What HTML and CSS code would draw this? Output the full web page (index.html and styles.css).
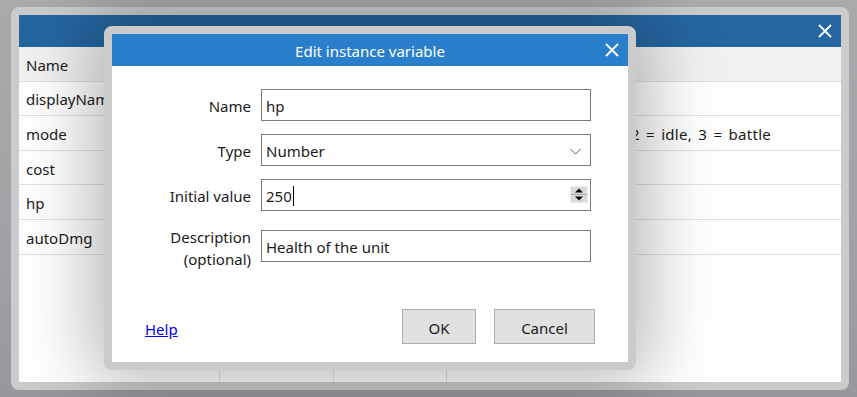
FILE: index.html
```html
<!DOCTYPE html>
<html>
<head>
<meta charset="utf-8">
<link rel="stylesheet" href="styles.css">
</head>
<body>
<div class="window">
  <div class="win-head">
    <svg class="close" width="14" height="14" viewBox="0 0 14 14"><path d="M1 1L13 13M13 1L1 13" stroke="#fff" stroke-width="1.8"/></svg>
  </div>
  <div class="table">
    <div class="col c1">
      <div class="cell head">Name</div>
      <div class="cell">displayName</div>
      <div class="cell">mode</div>
      <div class="cell">cost</div>
      <div class="cell">hp</div>
      <div class="cell">autoDmg</div>
    </div>
    <div class="col c2">
      <div class="cell head"></div><div class="cell"></div><div class="cell"></div><div class="cell"></div><div class="cell"></div><div class="cell"></div>
    </div>
    <div class="col c3">
      <div class="cell head"></div><div class="cell"></div><div class="cell"></div><div class="cell"></div><div class="cell"></div><div class="cell"></div>
    </div>
    <div class="col c4">
      <div class="cell head"></div>
      <div class="cell"></div>
      <div class="cell"><span class="hidden-pre">0 = walk, 1 = attack, </span><span class="desc">2 = idle, 3 = battle</span></div>
      <div class="cell"></div>
      <div class="cell"></div>
      <div class="cell"></div>
    </div>
  </div>
</div>

<div class="dialog">
  <div class="dlg-head">
    <span class="title">Edit instance variable</span>
    <svg class="dlg-close" width="14" height="14" viewBox="0 0 14 14"><path d="M1 1L13 13M13 1L1 13" stroke="#fff" stroke-width="1.8"/></svg>
  </div>
  <div class="dlg-body">
    <div class="form">
      <label class="lbl">Name</label>
      <div class="field"><span class="val">hp</span></div>
      <label class="lbl">Type</label>
      <div class="field select"><span class="val">Number</span>
        <svg class="chev" width="11" height="7" viewBox="0 0 11 7"><path d="M0.5 1L5.5 6L10.5 1" fill="none" stroke="#5a5a5a" stroke-width="1"/></svg>
      </div>
      <label class="lbl">Initial value</label>
      <div class="field number"><span class="val">250</span><span class="caret"></span>
        <div class="spin">
          <svg width="18" height="17" viewBox="0 0 18 17"><rect x="0" y="0" width="18" height="17" fill="#dadada"/><rect x="0.5" y="0.5" width="17" height="16" fill="none" stroke="#ececec"/><line x1="1" y1="8.5" x2="17" y2="8.5" stroke="#a8a8a8"/><path d="M5 6.5L9 2.5L13 6.5Z" fill="#000"/><path d="M5 10.5L9 14.5L13 10.5Z" fill="#000"/></svg>
        </div>
      </div>
      <label class="lbl two">Description<br>(optional)</label>
      <div class="field"><span class="val">Health of the unit</span></div>
    </div>
    <div class="footer">
      <a class="help" href="#">Help</a>
      <div class="buttons">
        <button class="btn ok">OK</button>
        <button class="btn cancel">Cancel</button>
      </div>
    </div>
  </div>
</div>
</body>
</html>
```

FILE: styles.css
```css
html, body {
  margin: 0;
  padding: 0;
}
body {
  width: 857px;
  height: 397px;
  overflow: hidden;
  background: linear-gradient(180deg, #aaaaad 0%, #a2a2a6 60%, #98989c 100%);
  font-family: "Noto Sans", "Open Sans", sans-serif;
  font-size: 15px;
  color: #1b1b1b;
  position: relative;
}
.window {
  margin: 7px 0 0 11px;
  width: 822px;
  height: 367px;
  border: 8px solid #cbcbcb;
  border-radius: 8px;
  background: #fff;
  display: flex;
  flex-direction: column;
  overflow: hidden;
}
.win-head {
  height: 32px;
  flex: none;
  background: #2566a0;
  display: flex;
  justify-content: flex-end;
  align-items: center;
  padding-right: 9px;
}
.table {
  flex: 1;
  display: flex;
}
.col {
  display: flex;
  flex-direction: column;
}
.c1 { width: 200px; border-right: 1px solid #e2e2e2; }
.c2 { width: 113px; border-right: 1px solid #e2e2e2; }
.c3 { width: 112px; border-right: 1px solid #e2e2e2; }
.c4 { flex: 1; }
.cell {
  border-bottom: 1px solid #e0e0e0;
  display: flex;
  align-items: center;
  padding: 2px 0 0 7px;
  box-sizing: border-box;
  height: 34.6px;
  white-space: nowrap;
  overflow: hidden;
}
.cell.head {
  background: #f1f1f1;
}
.hidden-pre {
  display: inline-block;
  width: 177px;
  overflow: hidden;
}
.desc {
  word-spacing: 2px;
  letter-spacing: 0.3px;
}
.dialog {
  position: absolute;
  left: 104px;
  top: 26px;
  width: 516px;
  height: 328px;
  border: 8px solid #cbcbcb;
  border-radius: 8px;
  background: #fff;
  box-shadow: 0 0 70px 14px rgba(0, 0, 0, 0.28);
  display: flex;
  flex-direction: column;
}
.dlg-head {
  height: 32px;
  flex: none;
  background: #2a7fcc;
  color: #fff;
  display: flex;
  align-items: center;
  justify-content: center;
  position: relative;
}
.title {
  padding-top: 2px;
}
.dlg-close {
  position: absolute;
  right: 9px;
  top: 9px;
}
.dlg-body {
  flex: 1;
  display: flex;
  flex-direction: column;
  padding: 23px 33px 18px 0;
}
.form {
  display: grid;
  grid-template-columns: 139px 330px;
  column-gap: 10px;
  row-gap: 13px;
  align-items: center;
}
.lbl {
  text-align: right;
  line-height: 22px;
  padding-top: 2px;
}
.lbl.two {
  margin-bottom: -2px;
}
.field {
  height: 30px;
  border: 1px solid #7a7a7a;
  padding-left: 4px;
  display: flex;
  align-items: center;
  position: relative;
}
.val {
  padding-top: 2px;
}
.chev {
  position: absolute;
  right: 9px;
  top: 13px;
}
.caret {
  display: inline-block;
  width: 1px;
  height: 20px;
  background: #000;
  margin-left: 1px;
  margin-top: 2px;
}
.spin {
  position: absolute;
  right: 2px;
  top: 6px;
  width: 18px;
  height: 17px;
  display: flex;
}
.footer {
  margin-top: auto;
  display: flex;
  justify-content: space-between;
  align-items: center;
  padding-left: 33px;
}
.help {
  color: #0000ee;
  text-decoration: underline;
  margin-top: 4px;
}
.buttons {
  display: flex;
  gap: 18px;
}
.btn {
  font-family: "Noto Sans", "Open Sans", sans-serif;
  font-size: 15px;
  color: #1b1b1b;
  background: #e1e1e1;
  border: 1px solid #adadad;
  height: 35px;
  padding: 2px 0 0;
}
.ok { width: 74px; }
.cancel { width: 101px; }
```
